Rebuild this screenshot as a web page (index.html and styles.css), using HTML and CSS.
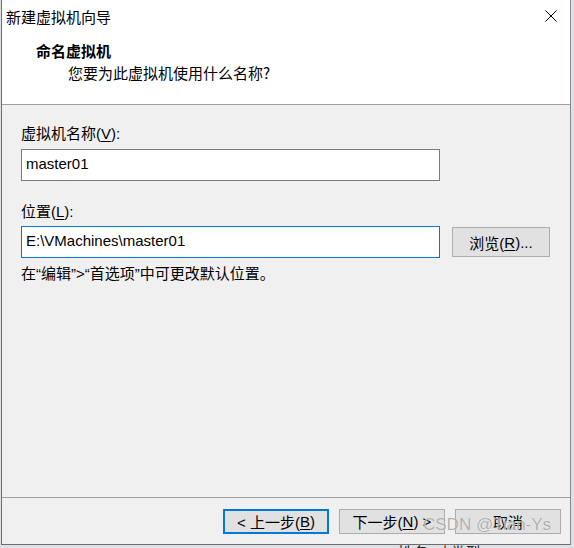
FILE: index.html
```html
<!DOCTYPE html>
<html lang="zh-CN">
<head>
<meta charset="utf-8">
<title>新建虚拟机向导</title>
<link rel="stylesheet" href="styles.css">
</head>
<body>
<div class="window">
  <div class="top">
    <div class="titlebar">
      <span class="title">新建虚拟机向导</span>
      <svg class="close" width="12" height="12" viewBox="0 0 12 12"><path d="M0.5 0.5 L11.5 11.5 M11.5 0.5 L0.5 11.5" stroke="#000" stroke-width="1" fill="none"/></svg>
    </div>
    <div class="header">
      <div class="h-title">命名虚拟机</div>
      <div class="h-sub">您要为此虚拟机使用什么名称?</div>
    </div>
  </div>
  <div class="content">
    <div class="label">虚拟机名称(<u>V</u>):</div>
    <div class="field">master01</div>
    <div class="label label2">位置(<u>L</u>):</div>
    <div class="row">
      <div class="field focus">E:\VMachines\master01</div>
      <div class="btn browse">浏览(<u>R</u>)...</div>
    </div>
    <div class="hint">在“编辑”&gt;“首选项”中可更改默认位置。</div>
  </div>
  <div class="footer">
    <div class="btn nav default">&lt; 上一步(<u>B</u>)</div>
    <div class="btn nav">下一步(<u>N</u>) &gt;</div>
    <div class="btn nav">取消</div>
    <div class="watermark">CSDN @Tian-Ys</div>
  </div>
</div>
<div class="behind"><span>姓名：| 类型</span></div>
</body>
</html>
```
FILE: styles.css
```css
html, body {
  margin: 0;
  padding: 0;
}
body {
  width: 574px;
  height: 548px;
  overflow: hidden;
  background: #dde1e6;
  font-family: "Liberation Sans", "Noto Sans CJK SC", sans-serif;
  font-size: 15px;
  color: #000;
}
u {
  text-decoration: underline;
  text-underline-offset: 2px;
}
.window {
  position: relative;
  width: 568px;
  height: 544px;
  margin-left: 1px;
  border-left: 1px solid #6e6e6e;
  border-right: 1px solid #8a8a8a;
  border-bottom: 1px solid #6e6e6e;
  background: #f0f0f0;
  display: flex;
  flex-direction: column;
}
.top {
  background: #fff;
  height: 104px;
  border-bottom: 1px solid #a0a0a0;
}
.titlebar {
  height: 32px;
  display: flex;
  align-items: center;
  justify-content: space-between;
  padding: 0 13px 0 4px;
}
.title {
  font-family: "Noto Sans CJK SC", sans-serif;
  font-size: 15px;
  line-height: 20px;
  margin-top: 1px;
  color: #000;
}
.close {
  display: block;
  margin-top: 0;
}
.header {
  padding-left: 34px;
}
.h-title {
  font-family: "Noto Sans CJK SC", sans-serif;
  font-weight: bold;
  font-size: 15px;
  line-height: 20px;
  margin-top: 9px;
}
.h-sub {
  font-family: "Noto Sans CJK SC", sans-serif;
  font-size: 15px;
  line-height: 20px;
  margin-top: 2px;
  padding-left: 32px;
}
.content {
  flex: 1;
  padding: 19px 0 0 19px;
  border-bottom: 1px solid #a0a0a0;
}
.label {
  line-height: 20px;
  height: 20px;
}
.label2 {
  margin-top: 21px;
}
.field {
  box-sizing: border-box;
  width: 419px;
  height: 32px;
  margin-top: 5px;
  border: 1px solid #7a7a7a;
  background: #fff;
  padding: 0 4px;
  line-height: 28px;
}
.row {
  display: flex;
  align-items: center;
  gap: 12px;
  margin-top: 4px;
}
.row .field {
  margin-top: 0;
}
.field.focus {
  border-color: #0078d7;
}
.btn {
  box-sizing: border-box;
  background: #e1e1e1;
  border: 1px solid #adadad;
  display: flex;
  align-items: center;
  justify-content: center;
}
.browse {
  width: 98px;
  height: 30px;
}
.hint {
  margin-top: 6px;
  line-height: 20px;
}
.footer {
  position: relative;
  height: 46px;
  display: flex;
  justify-content: flex-end;
  gap: 10px;
  padding: 11px 9px 0 0;
  box-sizing: border-box;
  align-items: flex-start;
}
.nav {
  width: 106px;
  height: 25px;
}
.nav.default {
  border: 2px solid #0078d7;
}
.watermark {
  position: absolute;
  left: 421px;
  top: 16px;
  font-family: "Liberation Sans", sans-serif;
  font-size: 17px;
  line-height: 22px;
  color: rgba(150, 150, 150, 0.75);
  text-shadow: 0 0 1px rgba(255, 255, 255, 0.9);
  pointer-events: none;
}
.behind {
  height: 3px;
  overflow: hidden;
  padding-left: 398px;
}
.behind span {
  display: block;
  font-family: "Noto Sans CJK SC", sans-serif;
  font-size: 15px;
  line-height: 14px;
  color: #222;
}
```
